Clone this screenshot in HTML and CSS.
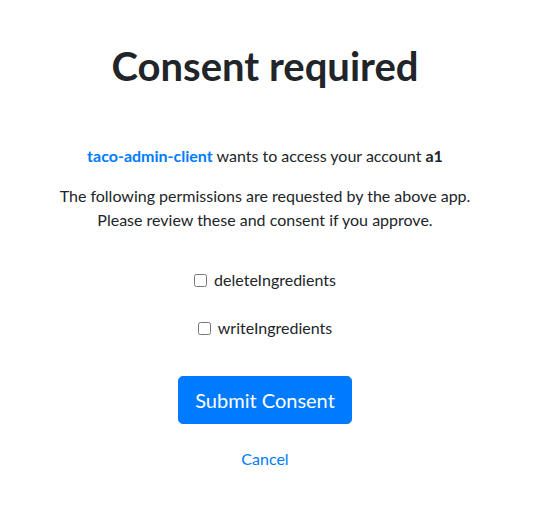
FILE: index.html
```html
<!DOCTYPE html>
<html lang="en">
<head>
<meta charset="utf-8">
<title>Consent required</title>
<link rel="stylesheet" href="styles.css">
</head>
<body>
<div class="container">
  <div class="title-row">
    <h1 class="title">Consent required</h1>
  </div>
  <p class="intro"><span class="client">taco-admin-client</span> wants to access your account <span class="user">a1</span></p>
  <div class="note-row">
    <p class="note">The following permissions are requested by the above app.<br>Please review these and consent if you approve.</p>
  </div>
  <form class="consent-form">
    <div class="form-group check">
      <input class="check-input" type="checkbox" id="s1" name="scope" value="deleteIngredients">
      <label class="check-label" for="s1">deleteIngredients</label>
    </div>
    <div class="form-group check">
      <input class="check-input" type="checkbox" id="s2" name="scope" value="writeIngredients">
      <label class="check-label" for="s2">writeIngredients</label>
    </div>
    <div class="form-group submit-group">
      <button class="btn btn-primary" type="button">Submit Consent</button>
    </div>
    <div class="form-group">
      <button class="btn btn-link" type="reset">Cancel</button>
    </div>
  </form>
</div>
</body>
</html>
```

FILE: styles.css
```css
html, body {
  margin: 0;
  padding: 0;
  background: #fff;
}
body {
  font-family: "Lato", "Liberation Sans", sans-serif;
  font-size: 16px;
  line-height: 24px;
  color: #212529;
}
.container {
  width: 530px;
  box-sizing: border-box;
  padding: 0 15px;
  text-align: center;
}
.title-row {
  padding: 42px 0 46px;
}
.title {
  margin: 0 0 8px;
  font-size: 40px;
  font-weight: 700;
  line-height: 48px;
}
.intro {
  margin: 0 0 16px;
}
.client {
  font-weight: 700;
  color: #007bff;
}
.user {
  font-weight: 700;
}
.note-row {
  padding-bottom: 16px;
}
.note {
  margin: 0 0 16px;
}
.consent-form {
  margin: 0;
}
.form-group {
  margin-bottom: 16px;
}
.check {
  padding: 4px 0;
  display: flex;
  justify-content: center;
  align-items: center;
  gap: 7px;
}
.check-input {
  margin: 0;
  width: 13px;
  height: 13px;
}
.submit-group {
  padding-top: 16px;
}
.btn {
  display: inline-block;
  font-family: inherit;
  border: 1px solid transparent;
  cursor: pointer;
}
.btn-primary {
  background: #007bff;
  border-color: #007bff;
  color: #fff;
  font-size: 20px;
  line-height: 30px;
  padding: 8px 16px;
  border-radius: 4.8px;
}
.btn-link {
  background: transparent;
  color: #007bff;
  font-size: 16px;
  line-height: 24px;
  padding: 6px 12px;
}
```
